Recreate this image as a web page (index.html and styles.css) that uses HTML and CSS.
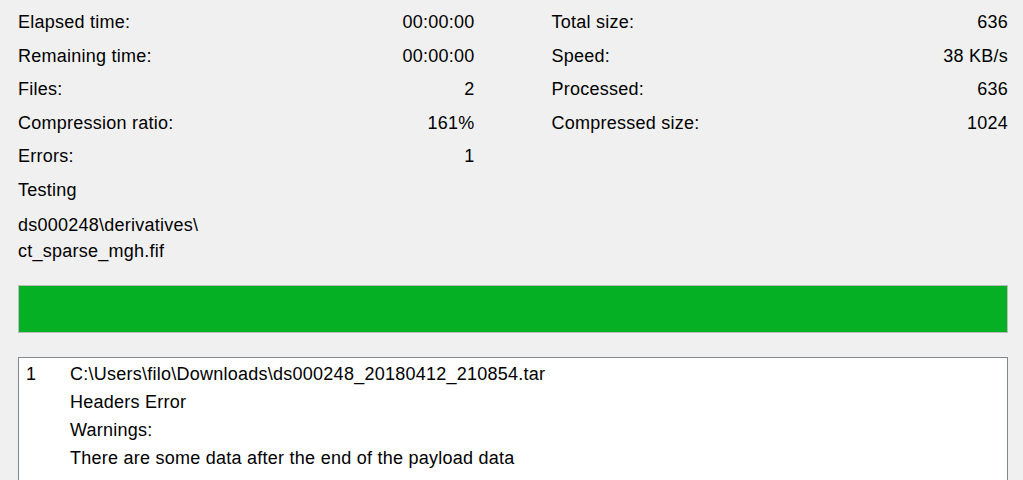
FILE: index.html
```html
<!DOCTYPE html>
<html>
<head>
<meta charset="utf-8">
<title>Testing</title>
<link rel="stylesheet" href="styles.css">
</head>
<body>
<div class="dialog">
  <div class="stats">
    <div class="col">
      <div class="row"><span>Elapsed time:</span><span>00:00:00</span></div>
      <div class="row"><span>Remaining time:</span><span>00:00:00</span></div>
      <div class="row"><span>Files:</span><span>2</span></div>
      <div class="row"><span>Compression ratio:</span><span>161%</span></div>
      <div class="row"><span>Errors:</span><span>1</span></div>
    </div>
    <div class="col">
      <div class="row"><span>Total size:</span><span>636</span></div>
      <div class="row"><span>Speed:</span><span>38 KB/s</span></div>
      <div class="row"><span>Processed:</span><span>636</span></div>
      <div class="row"><span>Compressed size:</span><span>1024</span></div>
    </div>
  </div>
  <div class="status">Testing</div>
  <div class="path">ds000248\derivatives\<br>ct_sparse_mgh.fif</div>
  <div class="progress"><div class="fill" style="width:100%"></div></div>
  <div class="log">
    <div class="entry"><span class="num">1</span><span>C:\Users\filo\Downloads\ds000248_20180412_210854.tar</span></div>
    <div class="entry"><span class="num"></span><span>Headers Error</span></div>
    <div class="entry"><span class="num"></span><span>Warnings:</span></div>
    <div class="entry"><span class="num"></span><span>There are some data after the end of the payload data</span></div>
  </div>
</div>
</body>
</html>
```
FILE: styles.css
```css
html, body {
  margin: 0;
  padding: 0;
  background: #f0f0f0;
  overflow: hidden;
}
body {
  font-family: "Liberation Sans", Arial, sans-serif;
  font-size: 18px;
  letter-spacing: 0.25px;
  color: #000;
}
.dialog {
  box-sizing: border-box;
  height: 100vh;
  padding: 9px 15px 0 18px;
  display: flex;
  flex-direction: column;
  overflow: hidden;
}
.stats {
  display: grid;
  grid-template-columns: 1fr 1fr;
  column-gap: 77px;
}
.col {
  display: flex;
  flex-direction: column;
  gap: 7.5px;
}
.row {
  display: flex;
  justify-content: space-between;
  line-height: 26px;
  height: 26px;
}
.status {
  margin-top: 7.5px;
  line-height: 26px;
}
.path {
  margin-top: 9.3px;
  line-height: 26px;
}
.progress {
  margin-top: 21px;
  height: 46px;
  flex: none;
  border: 1px solid #bcbcbc;
  background: #e6e6e6;
}
.fill {
  height: 100%;
  background: #06b025;
}
.log {
  margin-top: 24px;
  flex: 1;
  border: 1px solid #828790;
  border-bottom: none;
  background: #ffffff;
  padding: 2px 7px 0;
  overflow: hidden;
}
.entry {
  display: grid;
  grid-template-columns: 44px 1fr;
  line-height: 28px;
}
```
